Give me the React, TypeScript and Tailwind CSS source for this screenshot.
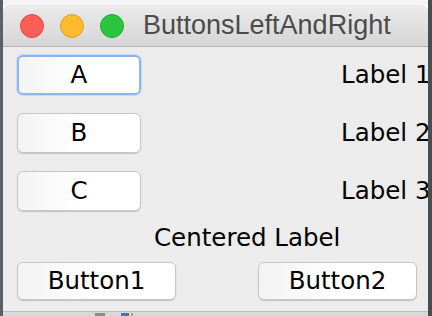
import React from 'react';

const font = { fontFamily: '"DejaVu Sans", Verdana, sans-serif' };

const MacButton = ({ label, width, height, focused = false }: { label: string; width: string; height: string; focused?: boolean }) => (
  <button
    className={`${width} ${height} shrink-0 rounded-[6px] bg-gradient-to-r from-[#f3f3f3] via-white to-white text-[24.5px] text-black leading-none flex items-center justify-center ${
      focused
        ? 'border-2 border-[#8fb6ec] shadow-[0_0_0_1px_#c4daf6]'
        : 'border border-[#c6c6c6] shadow-[0_1px_1px_rgba(0,0,0,0.18)]'
    }`}
    style={font}
  >
    {label}
  </button>
);

const Row = ({ btn, label, focused }: { btn: string; label: string; focused?: boolean }) => (
  <div className="flex items-center h-[40px]">
    <MacButton label={btn} width="w-[124px]" height="h-[40px]" focused={focused} />
    <span className="ml-[200px] whitespace-nowrap text-[24.5px] text-black" style={font}>
      {label}
    </span>
  </div>
);

export default function App() {
  return (
    <div className="w-[432px] h-[316px] bg-white overflow-hidden flex">
      {/* desktop edge */}
      <div className="w-[3px] h-full bg-[#5c5f63] shrink-0" />
      <div className="flex flex-col w-[425px] shrink-0">
        <div className="h-[5px] bg-[#f4f4f4] shrink-0" />
        {/* window */}
        <div className="w-[425px] h-[306px] shrink-0 flex flex-col rounded-t-[7px] overflow-hidden bg-[#ececec]">
          {/* title bar */}
          <div className="h-[42px] shrink-0 flex items-center bg-gradient-to-b from-[#ebebeb] to-[#d5d5d5] border-b border-[#b4b4b4]">
            <div className="flex items-center gap-[16px] ml-[17px]">
              <span className="w-[24px] h-[24px] rounded-full bg-[#fc5f57] border border-[#e2463f]" />
              <span className="w-[24px] h-[24px] rounded-full bg-[#fdbb2f] border border-[#e0a028]" />
              <span className="w-[24px] h-[24px] rounded-full bg-[#2ac43f] border border-[#1eaa2f]" />
            </div>
            <span
              className="ml-[19px] text-[27px] text-[#4b4b4b] leading-none whitespace-nowrap"
              style={{ fontFamily: '"Liberation Sans", Arial, sans-serif' }}
            >
              ButtonsLeftAndRight
            </span>
          </div>
          {/* content */}
          <div className="flex-1 flex flex-col pl-[14px] pt-[8px] overflow-hidden">
            <div className="flex flex-col gap-[18px]">
              <Row btn="A" label="Label 1" focused />
              <Row btn="B" label="Label 2" />
              <Row btn="C" label="Label 3" />
            </div>
            <div
              className="mt-[13px] h-[28px] leading-[28px] pl-[137px] text-[24.5px] text-black whitespace-nowrap"
              style={font}
            >
              Centered Label
            </div>
            <div className="mt-[10px] flex items-center justify-between pr-[11px]">
              <MacButton label="Button1" width="w-[159px]" height="h-[38px]" />
              <MacButton label="Button2" width="w-[159px]" height="h-[38px]" />
            </div>
          </div>
        </div>
        {/* desktop below window */}
        <div className="h-[5px] shrink-0 bg-[#d9d9d9] flex items-start overflow-hidden border-t border-[#bdbdbd]">
          <span className="ml-[92px] mt-[1px] w-[10px] h-[4px] bg-[#8c8c8c]" />
          <span className="ml-[16px] mt-[1px] w-[8px] h-[4px] bg-[#3f78b5]" />
          <span className="ml-[2px] mt-[1px] w-[2px] h-[4px] bg-[#c9a040]" />
        </div>
      </div>
      <div className="w-[4px] h-full bg-[#4a4d50] shrink-0" />
    </div>
  );
}
